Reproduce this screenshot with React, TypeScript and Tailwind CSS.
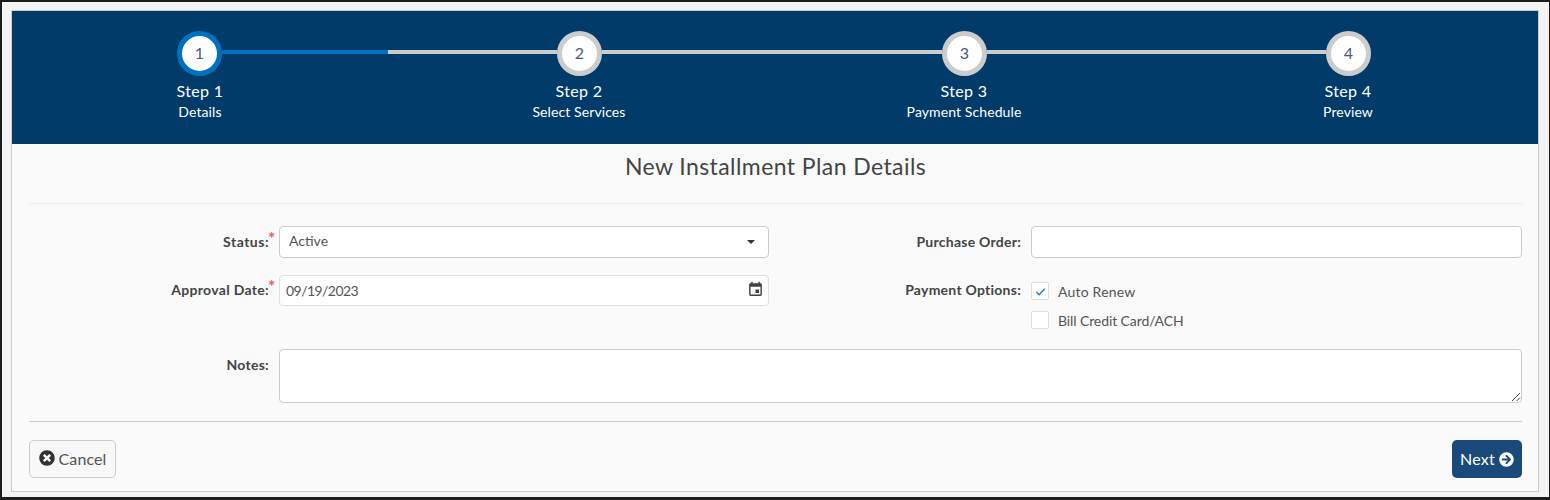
import React from "react";
import { FaTimesCircle, FaArrowCircleRight } from "react-icons/fa";

const F = "font-['Lato','Liberation_Sans',sans-serif]";

function Circle({ n, active }: { n: number; active?: boolean }) {
  return (
    <div
      className={`w-[45px] h-[45px] shrink-0 rounded-full bg-white border-[5px] flex items-center justify-center pb-[2px] text-[16px] text-[#4a5a80] ${active ? "border-[#0070c0]" : "border-[#cccccc]"}`}
    >
      {n}
    </div>
  );
}

function Bar({ w, color }: { w: string; color: string }) {
  return <div className={`h-[4px] mb-[3px] ${w} ${color}`} />;
}

function StepLabel({ a, b, w }: { a: string; b: string; w: string }) {
  return (
    <div className={`${w} shrink-0 flex flex-col items-center text-white`}>
      <div className="text-[16px] leading-[20px] tracking-[0.35px]">{a}</div>
      <div className="text-[14px] leading-[20px] mt-[1px] tracking-[0.1px]">{b}</div>
    </div>
  );
}

function Req() {
  return (
    <span className="relative w-0 inline-block">
      <span className="absolute left-[-1px] top-[-3px] text-[#e8604c] text-[17px] leading-[20px]">*</span>
    </span>
  );
}

export default function App() {
  return (
    <div className={`${F} w-[1550px] h-[500px] bg-[#f3f3f3] border-t-[2px] border-l-[2px] border-r-[1px] border-b-[3px] border-[#1c1c1c] pt-[8px] pl-[9px] pr-[10px] overflow-hidden`}>
      <div className="w-[1528px] h-[482px] border border-[#cccccc] bg-[#fafafa] flex flex-col">
        {/* Stepper */}
        <div className="h-[133px] shrink-0 bg-[#003b69] pt-[20px] pl-[165px]">
          <div className="flex items-center">
            <Circle n={1} active />
            <Bar w="w-[166px]" color="bg-[#0070c0]" />
            <Bar w="w-[169px]" color="bg-[#cccccc]" />
            <Circle n={2} />
            <Bar w="w-[340px]" color="bg-[#cccccc]" />
            <Circle n={3} />
            <Bar w="w-[339px]" color="bg-[#cccccc]" />
            <Circle n={4} />
          </div>
          <div className="flex mt-[5px] ml-[-77px]">
            <StepLabel a="Step 1" b="Details" w="w-[200px]" />
            <div className="w-[179px] shrink-0" />
            <StepLabel a="Step 2" b="Select Services" w="w-[200px]" />
            <div className="w-[185px] shrink-0" />
            <StepLabel a="Step 3" b="Payment Schedule" w="w-[200px]" />
            <div className="w-[184px] shrink-0" />
            <StepLabel a="Step 4" b="Preview" w="w-[200px]" />
          </div>
        </div>

        {/* Body */}
        <div className="flex-1 pl-[17px] pr-[16px] flex flex-col">
          <h2 className="h-[60px] shrink-0 border-b border-[#ececec] text-center text-[#444444] text-[23px] leading-[45px] tracking-[0.42px] font-normal">
            New Installment Plan Details
          </h2>

          <div className="flex mt-[22px]">
            <div className="w-[740px] shrink-0 flex flex-col">
              <div className="flex h-[32px]">
                <div className="w-[250px] shrink-0 pr-[10px] flex justify-end items-start text-[14px] font-bold text-[#444444] pt-[6px] leading-[20px] tracking-[0.5px]">
                  <span>Status:</span>
                  <Req />
                </div>
                <div className="w-[490px] h-[32px] bg-white border border-[#cccccc] rounded-[4px] flex items-center justify-between pl-[9px] pr-[13px] text-[14px] text-[#555555] pb-[3px]">
                  <span>Active</span>
                  <span className="w-0 h-0 border-x-[4px] border-x-transparent border-t-[4px] border-t-[#333333] mt-[2px]" />
                </div>
              </div>
              <div className="flex h-[31px] mt-[17px]">
                <div className="w-[250px] shrink-0 pr-[10px] flex justify-end items-start text-[14px] font-bold text-[#444444] pt-[5px] leading-[20px] tracking-[0.32px]">
                  <span>Approval Date:</span>
                  <Req />
                </div>
                <div className="w-[490px] h-[31px] bg-white border border-[#e0e0e0] rounded-[4px] flex items-center justify-between pl-[6px] pr-[4px] text-[14px] text-[#555555]">
                  <span className="tracking-[-0.55px]">09/19/2023</span>
                  <svg viewBox="0 0 24 24" width="17" height="17" className="mb-[3px]" fill="#3d4248">
                    <path d="M19 3h-1V1h-2v2H8V1H6v2H5a2 2 0 0 0-2 2v14a2 2 0 0 0 2 2h14a2 2 0 0 0 2-2V5a2 2 0 0 0-2-2zm0 16H5V8h14v11zm-7-7h5v5h-5z" />
                  </svg>
                </div>
              </div>
            </div>

            <div className="flex-1 flex flex-col">
              <div className="flex h-[32px]">
                <div className="w-[262px] shrink-0 pr-[10px] text-right text-[14px] font-bold text-[#444444] pt-[6px] leading-[20px] tracking-[0.25px]">
                  Purchase Order:
                </div>
                <div className="flex-1 h-[32px] bg-white border border-[#cccccc] rounded-[4px]" />
              </div>
              <div className="flex mt-[17px]">
                <div className="w-[262px] shrink-0 pr-[10px] text-right text-[14px] font-bold text-[#444444] pt-[5px] leading-[20px] tracking-[0.25px]">
                  Payment Options:
                </div>
                <div className="flex flex-col text-[14px] text-[#555555]">
                  <label className="flex items-center h-[18px] mt-[7px] tracking-[0.2px]">
                    <span className="w-[18px] h-[18px] bg-white border border-[#dddddd] rounded-[2px] flex items-center justify-center">
                      <svg viewBox="0 0 12 12" width="11" height="11" fill="none" stroke="#1f78c8" strokeWidth="1.4">
                        <path d="M1.5 6.5 4.5 9.5 10.5 3" />
                      </svg>
                    </span>
                    <span className="ml-[9px]">Auto Renew</span>
                  </label>
                  <label className="flex items-center h-[18px] mt-[11px] tracking-[-0.1px]">
                    <span className="w-[18px] h-[18px] bg-white border border-[#dddddd] rounded-[2px]" />
                    <span className="ml-[9px]">Bill Credit Card/ACH</span>
                  </label>
                </div>
              </div>
            </div>
          </div>

          <div className="flex mt-[20px]">
            <div className="w-[250px] shrink-0 pr-[10px] text-right text-[14px] font-bold text-[#444444] pt-[6px] leading-[20px] tracking-[0.28px]">
              Notes:
            </div>
            <div className="relative flex-1 h-[54px]">
              <textarea className="w-full h-full block bg-white border border-[#cccccc] rounded-[4px] outline-none resize-none" />
              <svg viewBox="0 0 10 10" width="10" height="10" className="absolute right-[1px] bottom-[1px]" stroke="#444444" strokeWidth="1" fill="none">
                <path d="M1 9 9 1M5.5 9 9 5.5" />
              </svg>
            </div>
          </div>

          <div className="border-t border-[#cccccc] mt-[18px]" />

          <div className="flex justify-between items-start mt-[18px]">
            <button className="h-[38px] w-[87px] border border-[#cccccc] rounded-[5px] bg-[#f8f8f8] flex items-center justify-center gap-[4px] text-[16px] text-[#555555] tracking-[0.1px]">
              <FaTimesCircle className="w-[16px] h-[16px] text-[#333333] mb-[2px]" />
              Cancel
            </button>
            <button className="h-[38px] w-[70px] rounded-[5px] bg-[#1a4a7a] flex items-center justify-center gap-[4px] text-[16px] text-white tracking-[0.2px]">
              Next
              <FaArrowCircleRight className="w-[15px] h-[15px] text-white" />
            </button>
          </div>
        </div>
      </div>
    </div>
  );
}
